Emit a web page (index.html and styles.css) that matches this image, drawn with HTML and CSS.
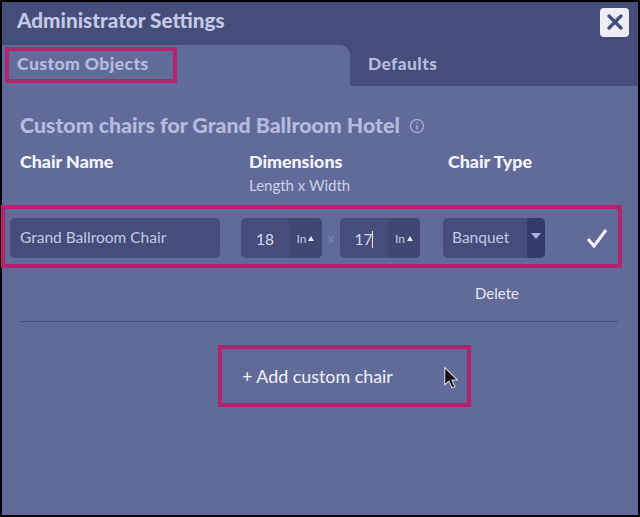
FILE: index.html
```html
<!DOCTYPE html>
<html lang="en">
<head>
<meta charset="utf-8">
<title>Administrator Settings</title>
<link rel="stylesheet" href="styles.css">
</head>
<body>
<div class="window">
  <header class="header">
    <h1 class="title">Administrator Settings</h1>
    <button class="close" aria-label="Close">
      <svg width="16" height="16" viewBox="0 0 16 16"><path d="M2 2L14 14M14 2L2 14" stroke="#454e7b" stroke-width="3.2" stroke-linecap="round" fill="none"/></svg>
    </button>
  </header>
  <nav class="tabs">
    <div class="tab tab-active">Custom Objects</div>
    <div class="tab">Defaults</div>
  </nav>
  <main class="content">
    <h2 class="heading">Custom chairs for Grand Ballroom Hotel
      <svg class="info" width="16" height="16" viewBox="0 0 16 16"><circle cx="8" cy="8" r="6.5" fill="none" stroke="#b5bcdf" stroke-width="1.1"/><path d="M8 7.2V11.4" stroke="#b5bcdf" stroke-width="1.3"/><circle cx="8" cy="5" r=".8" fill="#b5bcdf"/></svg>
    </h2>
    <div class="labels">
      <div class="col-name"><div class="label">Chair Name</div></div>
      <div class="col-dim"><div class="label">Dimensions</div><div class="sublabel">Length x Width</div></div>
      <div class="col-type"><div class="label">Chair Type</div></div>
    </div>
    <div class="row">
      <div class="field name-field">Grand Ballroom Chair</div>
      <div class="dims">
        <div class="field num"><span class="num-value">18</span><span class="unit">In<i class="tri-up"></i></span></div>
        <span class="times">x</span>
        <div class="field num"><span class="num-value">17<i class="caret"></i></span><span class="unit">In<i class="tri-up"></i></span></div>
      </div>
      <div class="field select"><span class="select-value">Banquet</span><span class="select-arrow"><i class="tri-down"></i></span></div>
      <svg class="check" width="24" height="22" viewBox="0 0 24 22"><path d="M3 12L9 19L21 3" fill="none" stroke="#f4f5fb" stroke-width="3"/></svg>
    </div>
    <div class="delete-row"><span class="delete">Delete</span></div>
    <hr class="divider">
    <div class="add-row"><span class="add">+ Add custom chair</span></div>
  </main>
  <div class="mark mark-tab"></div>
  <div class="mark mark-row"></div>
  <div class="mark mark-add"></div>
  <svg class="cursor" width="17" height="25" viewBox="0 0 16 24"><path d="M1.5 1.5V18L5.6 14.4L8.4 21L11.2 19.8L8.4 13.4H13.6Z" fill="#111" stroke="#d8dae6" stroke-width="1"/></svg>
</div>
</body>
</html>
```
FILE: styles.css
```css
* { box-sizing: border-box; }
html, body { margin: 0; padding: 0; background: #000; }
body { width: 640px; height: 517px; padding: 2px; overflow: hidden; font-family: Lato, "Noto Sans", sans-serif; }
.window { position: relative; width: 636px; height: 513px; background: #616b9a; display: flex; flex-direction: column; }

.header { height: 43px; background: #454e7b; display: flex; align-items: center; justify-content: space-between; padding: 0 9px 8px 15px; }
.title { margin: 0; font-size: 20.7px; font-weight: 900; color: #c3c9e6; }
.close { width: 29px; height: 29px; margin-top: 5px; padding: 0; border: 0; border-radius: 4px; background: #eceef3; display: flex; align-items: center; justify-content: center; }

.tabs { height: 41px; background: #454e7b; display: flex; }
.tab { display: flex; align-items: center; font-size: 17.6px; font-weight: 900; color: #b5bcdf; padding: 0 0 4px 0; letter-spacing: .4px; }
.tab-active { width: 348px; padding-left: 15px; background: #616b9a; border-radius: 0 10px 0 0; }
.tab-active + .tab { padding-left: 18px; font-size: 17.4px; }

.content { flex: 1; padding: 26px 20px 0 18px; display: flex; flex-direction: column; }
.heading { margin: 0; height: 26px; font-size: 21.3px; font-weight: 900; color: #b5bcdf; display: flex; align-items: center; gap: 9px; }
.info { margin-top: 1px; }

.labels { display: flex; margin-top: 13px; height: 44px; }
.col-name { width: 229px; }
.col-dim { width: 199px; }
.label { font-size: 17.8px; font-weight: 900; color: #f4f5fb; line-height: 20px; }
.sublabel { font-size: 15px; color: #ccd1ea; line-height: 20px; margin-top: 4px; }

.row { display: flex; align-items: center; height: 40px; margin: 23px 0 0 -10px; }
.field { height: 40px; background: #454e7b; border-radius: 5px; color: #c3c9e6; font-size: 15.5px; display: flex; align-items: center; }
.name-field { width: 210px; padding: 0 0 2px 10px; }
.dims { display: flex; align-items: center; margin-left: 21px; }
.num { width: 81px; overflow: hidden; }
.dims .num + .times + .num { width: 80px; }
.num-value { width: 48px; text-align: center; color: #d6daf0; padding-top: 1px; }
.caret { display: inline-block; width: 1px; height: 17px; background: #e6e8f4; vertical-align: -3px; }
.unit { flex: 1; height: 40px; background: #3f4773; display: flex; align-items: center; justify-content: center; gap: 2px; font-size: 12px; color: #c3c9e6; }
.tri-up { width: 0; height: 0; border: 3.5px solid transparent; border-top: 0; border-bottom: 5px solid #e6e8f4; }
.times { width: 18px; text-align: center; font-size: 13px; color: #7a83ae; }
.select { width: 102px; margin-left: 23px; overflow: hidden; justify-content: space-between; padding-left: 9px; }
.select-value { padding-bottom: 2px; }
.select-arrow { width: 18px; height: 40px; background: #333b6b; display: flex; align-items: center; justify-content: center; padding-bottom: 4px; }
.tri-down { width: 0; height: 0; border: 5px solid transparent; border-bottom: 0; border-top: 6px solid #a9b1d6; }
.check { margin-left: 40px; }

.delete-row { margin-top: 25px; padding-left: 455px; height: 20px; display: flex; align-items: center; }
.delete { font-size: 15px; color: #e4e6f4; }
.divider { width: 598px; height: 1px; margin: 18px 0 0 0; border: 0; background: #454e7b; }
.add-row { margin-top: 42px; padding-left: 222px; height: 24px; display: flex; align-items: center; }
.add { font-size: 17.85px; color: #f0f1f9; }

.mark { position: absolute; border: 4px solid #b3246f; }
.mark-tab { left: 3px; top: 45px; width: 172px; height: 36px; }
.mark-row { left: -1px; top: 203px; width: 621px; height: 63px; }
.mark-add { left: 216px; top: 343px; width: 253px; height: 62px; }
.cursor { position: absolute; left: 441px; top: 364px; }
```
